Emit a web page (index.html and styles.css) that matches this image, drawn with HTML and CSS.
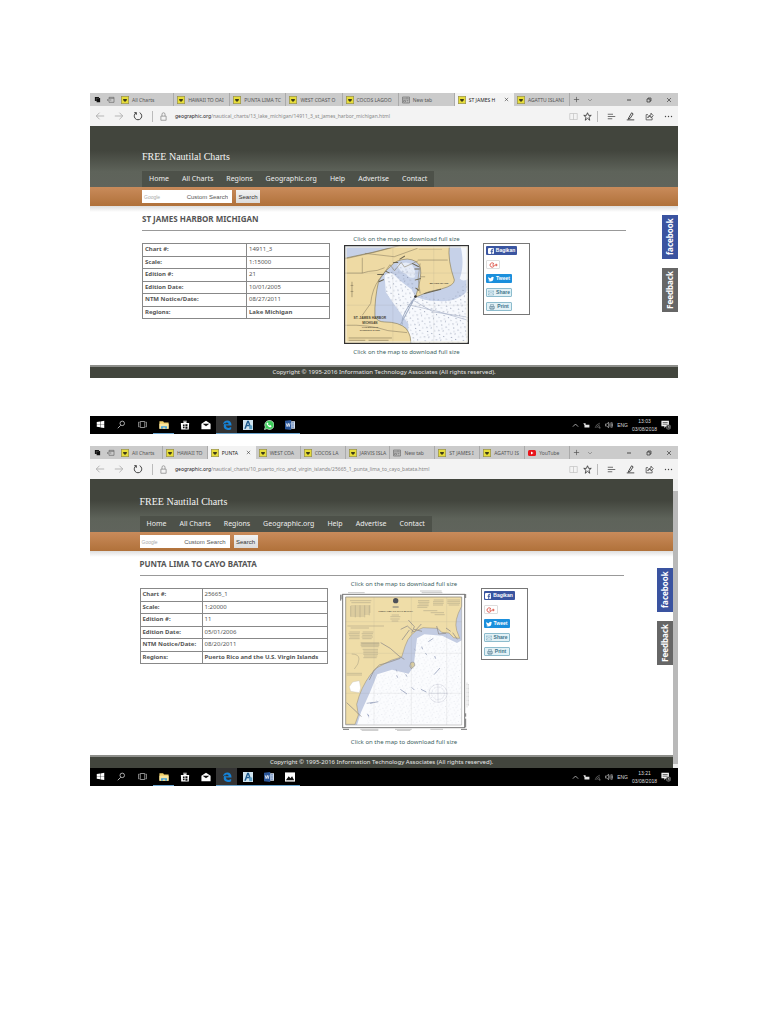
FILE: index.html
```html
<!DOCTYPE html>
<html lang="en">
<head>
<meta charset="utf-8">
<title>FREE Nautilal Charts</title>
<link rel="stylesheet" href="styles.css">
</head>
<body>
<svg class="defs" aria-hidden="true">
  <symbol id="fav" viewBox="0 0 16 16"><rect x=".7" y=".7" width="14.6" height="14.6" fill="#e6dc3a" stroke="#98924a" stroke-width="1.4"/><path d="M4 6h8l-1 3-3 3-3-3z" fill="#3d3b18"/></symbol>
  <symbol id="newtab" viewBox="0 0 16 16"><path d="M1 2h14v12H1zM1 6h14M3 4h2m2 0h6M3 9h4v3H3zm6 0h4m-4 3h4" fill="none" stroke="#777" stroke-width="1.500"/></symbol>
  <symbol id="yt" viewBox="0 0 16 16"><rect y="2" width="16" height="12" rx="3" fill="#e8151b"/><path d="M6 5v6l5-3z" fill="#fff"/></symbol>
  <symbol id="aside" viewBox="0 0 24 24"><path d="M3 3h14v4h4v14H9v-4H3z" fill="#111"/><path d="M8 16V8h9" fill="none" stroke="#777" stroke-width="1.500"/></symbol>
  <symbol id="setaside" viewBox="0 0 24 24"><path d="M6 8V4h15v15H6v-3M1 12h12M5 8l-4 4 4 4M6 7h15" fill="none" stroke="#666" stroke-width="2"/></symbol>
  <symbol id="back" viewBox="0 0 24 24"><path d="M22 12H3m8-8-8 8 8 8" fill="none" stroke="#aaa" stroke-width="2"/></symbol>
  <symbol id="fwd" viewBox="0 0 24 24"><path d="M2 12h19m-8-8 8 8-8 8" fill="none" stroke="#aaa" stroke-width="2"/></symbol>
  <symbol id="reload" viewBox="0 0 24 24"><path d="M8 4a9 9 0 1 0 8 0M8 4H3m5 0v5" fill="none" stroke="#444" stroke-width="2.400"/></symbol>
  <symbol id="lock" viewBox="0 0 24 24"><path d="M5 11h14v11H5zm3 0V6q0-4 4-4t4 4v5" fill="none" stroke="#888" stroke-width="2"/></symbol>
  <symbol id="book" viewBox="0 0 24 24"><path d="M2 4h20v16H2zm10 0v17" fill="none" stroke="#c4c4c4" stroke-width="2"/></symbol>
  <symbol id="star" viewBox="0 0 24 24"><path d="m12 2 3 7h7l-6 5 2 8-6-5-6 5 2-8-6-5h7z" fill="none" stroke="#333" stroke-width="2.200"/></symbol>
  <symbol id="hub" viewBox="0 0 24 24"><path d="M2 6h14M2 12h20M2 18h12" fill="none" stroke="#555" stroke-width="2.200"/></symbol>
  <symbol id="note" viewBox="0 0 24 24"><path d="M7 16 15 2l4 3-8 12-5 2zM2 21h20" fill="none" stroke="#333" stroke-width="2.300"/></symbol>
  <symbol id="sharei" viewBox="0 0 24 24"><path d="M8 7H3v14h16v-6M7 16q1-8 9-8V3l6 7-6 6v-5q-6 0-9 5z" fill="none" stroke="#444" stroke-width="2"/></symbol>
  <symbol id="more" viewBox="0 0 24 24"><g fill="#444"><circle cx="4" cy="12" r="1.800"/><circle cx="12" cy="12" r="1.800"/><circle cx="20" cy="12" r="1.800"/></g></symbol>
  <symbol id="plus" viewBox="0 0 24 24"><path d="M12 3v18M3 12h18" stroke="#555" stroke-width="2.400"/></symbol>
  <symbol id="down" viewBox="0 0 24 24"><path d="m4 8 8 8 8-8" fill="none" stroke="#777" stroke-width="2.400"/></symbol>
  <symbol id="min" viewBox="0 0 24 24"><path d="M4 12h16" stroke="#222" stroke-width="3"/></symbol>
  <symbol id="max" viewBox="0 0 24 24"><path d="M4 8h12v12H4zm4 0V4h12v12h-4" fill="none" stroke="#222" stroke-width="2.600"/></symbol>
  <symbol id="close" viewBox="0 0 24 24"><path d="m4 4 16 16M20 4 4 20" stroke="#333" stroke-width="2.600"/></symbol>
  <symbol id="win" viewBox="0 0 24 24"><path d="m2 5 9-1v7H2zm10-1 10-2v9H12zM2 12h9v7l-9-1zm10 0h10v9l-10-1z" fill="#fff"/></symbol>
  <symbol id="search" viewBox="0 0 24 24"><circle cx="14" cy="9" r="6" fill="none" stroke="#ddd" stroke-width="2"/><path d="m10 14-8 8" stroke="#ddd" stroke-width="2"/></symbol>
  <symbol id="task" viewBox="0 0 24 24"><path d="M6 4h12v16H6zM4 6H1v12h3m16-12h3v12h-3" fill="none" stroke="#bbb" stroke-width="2"/></symbol>
  <symbol id="folder" viewBox="0 0 24 24"><path d="M1 3h9l2 3h11v15H1z" fill="#efd06a"/><path d="M1 9h22v12H1z" fill="#f8e6a0"/><path d="M5 21v-6h14v6h-4v-3H9v3z" fill="#3fa0dc"/></symbol>
  <symbol id="store" viewBox="0 0 24 24"><path d="M2 7h20l-1 16H3zM8 7V2h8v5" fill="#fff"/><path d="M9 7V3h6v4" fill="none" stroke="#000"/><path d="M7 11h4v4H7zm6-1h5v5h-5zm-6 6h4v4H7zm6 0h5v5h-5z" fill="#111"/></symbol>
  <symbol id="mail" viewBox="0 0 24 24"><path d="m1 9 11-7 11 7v13H1z" fill="#fff"/><path d="M4 9h16l-8 6z" fill="#111"/></symbol>
  <symbol id="edge" viewBox="0 0 24 24"><path d="M2 11Q4 1 13 1q9 0 10 12H9q1 6 7 6 3 0 6-2v5q-3 2-8 2Q4 23 4 14q0-5 6-8-3 3-2 4h8q0-4-4-4-6 0-10 5z" fill="#1683d8"/></symbol>
  <symbol id="acad" viewBox="0 0 24 24"><path d="M0 0h24v24H0z" fill="#cfe3ee"/><path d="m3 21 7-19h4l7 19h-4l-2-6H9l-2 6zm7-9h4l-2-6z" fill="#1d5a8e"/><path d="M15 13h7v9h-7z" fill="#5b9fc4"/></symbol>
  <symbol id="wa" viewBox="0 0 24 24"><path d="M12 1a11 11 0 1 1-5 20l-6 2 2-6A11 11 0 0 1 12 1z" fill="#3ccb5a" stroke="#e8f8ea" stroke-width="1.500"/><path d="M8 6q-4 2 1 8t9 2l-1-3-3-1-1 2-4-4 2-2z" fill="#fff"/></symbol>
  <symbol id="word" viewBox="0 0 24 24"><path d="M12 3h12v18H12z" fill="#dfe8f5"/><path d="M0 2 15 0v24L0 22z" fill="#2a5699"/><path d="m3 8 2 8 3-8 2 8 2-8" fill="none" stroke="#fff" stroke-width="1.800"/><path d="M16 7h6m-6 5h6m-6 5h6" stroke="#2a5699" stroke-width="2"/></symbol>
  <symbol id="photo" viewBox="0 0 24 24"><path d="M0 1h24v22H0z" fill="#fff"/><path d="m2 20 7-10 4 5 4-5 5 10z" fill="#111"/></symbol>
  <symbol id="up" viewBox="0 0 24 24"><path d="m3 16 9-9 9 9" fill="none" stroke="#ddd" stroke-width="2.500"/></symbol>
  <symbol id="batt" viewBox="0 0 24 24"><path d="M5 9h17v10H5zM1 4h8v7H5z" fill="#e6e6e6"/></symbol>
  <symbol id="wifi" viewBox="0 0 24 24"><path d="M4 20Q6 8 20 4M9 20q1-7 11-10m-6 10q1-4 6-5" fill="none" stroke="#8c8c8c" stroke-width="2"/><circle cx="20" cy="20" r="2" fill="#ccc"/></symbol>
  <symbol id="vol" viewBox="0 0 24 24"><path d="M1 9h4l6-5v16l-6-5H1zM14 8q3 4 0 8m3-11q5 7 0 14m3-16q6 9 0 18" fill="none" stroke="#ddd" stroke-width="1.800"/></symbol>
  <symbol id="notif" viewBox="0 0 24 24"><path d="M1 2h18v13h-7l-4 4v-4H1z" fill="#f2f2f2"/><path d="M4 6h12M4 10h12" stroke="#222" stroke-width="1.500"/><circle cx="18" cy="17" r="5.500" fill="#333" stroke="#aaa"/><path d="M17 15h2v5" fill="none" stroke="#ddd" stroke-width="1.500"/></symbol>
  <symbol id="fb" viewBox="0 0 24 24"><rect width="24" height="24" rx="4" fill="#fff"/><path d="M13 24v-9h-3v-4h3V8q0-5 5-5h3v4h-2q-2 0-2 2v2h4l-1 4h-3v9z" fill="#3a55a0"/></symbol>
  <symbol id="gp" viewBox="0 0 36 24"><path d="M20 7Q16 2 10 4q-7 3-6 9 2 8 9 8 8-1 8-9h-8M24 12h10m-5-5v10" fill="none" stroke="#d94a3f" stroke-width="3.500"/></symbol>
  <symbol id="tw" viewBox="0 0 24 24"><path d="M1 3q5 6 11 6 0-6 5-6 3 0 4 2l3-1-2 4q0 14-14 14-5 0-8-3 5 0 7-2-4-1-5-4h2Q0 11 1 7l2 1Q0 5 1 3z" fill="#fff"/></symbol>
  <symbol id="env" viewBox="0 0 24 24"><path d="M1 4h22v16H1zl11 9L23 4M1 20l8-9m14 9-8-9" fill="#eaf4f8" stroke="#6ea3bb" stroke-width="1.800"/></symbol>
  <symbol id="prn" viewBox="0 0 24 24"><path d="M6 2h12v8H6zM2 10h20v8H2zM6 15h12v7H6z" fill="#cfe0e8" stroke="#5b8295" stroke-width="1.800"/></symbol>
</svg>

<main class="document">
  <section class="screen">
    <div class="tabbar">
      <div class="tab-tools"><svg class="i7"><use href="#aside"/></svg><svg class="i8"><use href="#setaside"/></svg></div>
      <div class="tabs">
        <button class="tab"><svg><use href="#fav"/></svg><span>All Charts</span></button>
        <button class="tab"><svg><use href="#fav"/></svg><span>HAWAII TO OAI</span></button>
        <button class="tab"><svg><use href="#fav"/></svg><span>PUNTA LIMA TC</span></button>
        <button class="tab"><svg><use href="#fav"/></svg><span>WEST COAST O</span></button>
        <button class="tab"><svg><use href="#fav"/></svg><span>COCOS LAGOO</span></button>
        <button class="tab"><svg><use href="#newtab"/></svg><span>New tab</span></button>
        <button class="tab active"><svg><use href="#fav"/></svg><span>ST JAMES H</span><svg class="x"><use href="#close"/></svg></button>
        <button class="tab"><svg><use href="#fav"/></svg><span>AGATTU ISLANI</span></button>
      </div>
      <div class="tab-add"><svg class="i7"><use href="#plus"/></svg><svg class="i6"><use href="#down"/></svg></div>
      <div class="win-buttons"><svg class="i6"><use href="#min"/></svg><svg class="i6"><use href="#max"/></svg><svg class="i6"><use href="#close"/></svg></div>
    </div>
    <div class="address">
      <svg class="i10"><use href="#back"/></svg><svg class="i10"><use href="#fwd"/></svg><svg class="i10"><use href="#reload"/></svg><i class="bar"></i><svg class="i9"><use href="#lock"/></svg>
      <p class="url"><b>geographic.org</b>/nautical_charts/13_lake_michigan/14911_3_st_james_harbor_michigan.html</p>
      <div class="url-tools"><svg class="i9"><use href="#book"/></svg><svg class="i9"><use href="#star"/></svg><i class="bar"></i></div>
      <div class="hub-tools"><svg class="i9"><use href="#hub"/></svg><svg class="i9"><use href="#note"/></svg><svg class="i9"><use href="#sharei"/></svg><svg class="i9"><use href="#more"/></svg></div>
    </div>
    <div class="viewport">
      <div class="site">
        <header class="site-head tall"><div class="wrap">
          <h1>FREE Nautilal Charts</h1>
          <nav><a href="#">Home</a><a href="#">All Charts</a><a href="#">Regions</a><a href="#">Geographic.org</a><a href="#">Help</a><a href="#">Advertise</a><a href="#">Contact</a></nav>
        </div></header>
        <div class="search-band"><form class="wrap"><label class="search"><span>Google</span><input type="text" value="Custom Search"></label><button type="button">Search</button></form></div>
        <div class="content"><div class="wrap">
          <h2>ST JAMES HARBOR MICHIGAN</h2>
          <div class="details">
            <table class="facts wide-label">
              <tr><th>Chart #:</th><td>14911_3</td></tr>
              <tr><th>Scale:</th><td>1:15000</td></tr>
              <tr><th>Edition #:</th><td>21</td></tr>
              <tr><th>Edition Date:</th><td>10/01/2005</td></tr>
              <tr><th>NTM Notice/Date:</th><td>08/27/2011</td></tr>
              <tr><th>Regions:</th><td><b>Lake Michigan</b></td></tr>
            </table>
            <div class="chart">
              <a href="#">Click on the map to download full size</a>
              <svg class="map-harbor" viewBox="0 0 376 296" preserveAspectRatio="none">
                <defs>
                  <pattern id="snd" width="37" height="29" patternUnits="userSpaceOnUse" patternTransform="rotate(14)"><path d="M4 5h3M17 3h3M30 9h2M9 16h3M23 19h3M33 25h2M13 26h2" stroke="#7f89a3" stroke-width="2.500"/></pattern>
                </defs>
                <rect width="376" height="296" fill="#c6d1e8"/>
                <path d="M122 92q10-14 26-5 30 30 55 45l12 22q45 20 90 8 55-14 71-70v204H208q-18-20-14-60-45-60-68-95z" fill="#f7f9fd"/>
                <path d="M215 155q60 12 105-20 35-25 45-75h11v70q-40 60-161 25z" fill="#c6d1e8"/>
                <path d="M350 0h26v100q-18 12-28 0 16-40 2-100z" fill="#f4f7fc"/>
                <path d="M160 60q30-15 45 0 14 22 7 37-17 4-25-10-20-6-27-27z" fill="#e6ecf7"/>
                <path d="M215 154q-50 65-38 84M215 154l-45 84" fill="none" stroke="#a3afc6" stroke-width="3"/>
                <path d="M190 178l90 20 96 28M208 165l60 35 100 15" fill="none" stroke="#aab3c8" stroke-width="2"/>
                <path d="M0 40Q95 22 172 0h145q-6 45 15 105 0 16-38 26-38 5-79 25 20-60 15-88Q222 44 190 42q-36 2-50 22-24 20-35 40-14 60-12 110 8 16 28 16 45 0 66 20 18 25 12 46H0z" fill="#eedaa4" stroke="#8d805b" stroke-width="2"/>
                <path d="M0 42Q95 22 172 1M0 84h55V38M55 84q15-6 45-8l22-8M63 25l88 10 70-25M222 45h90M222 48l-40 18-10-14-20 25-14-18-36 52M229 55l-6 45 6 45M230 95h14M106 103Q85 130 80 175L55 210M0 240q75-3 132 16l58 6" fill="none" stroke="#84795f" stroke-width="1.600"/>
                <path d="M100 88h20M125 78l12 6M148 52h15M167 43l16-10M205 55l20 10M212 72h15M213 105l18-5M215 128l11 8M105 110l15-7M240 146l28-8 24-6" fill="none" stroke="#6b6450" stroke-width="3"/>
                <path d="M128 90q50-50 85-5l-6 55q55 30 110 18l59-50v188H208q-18-20-14-60-40-50-68-95z" fill="url(#snd)"/>
                <path d="M147 0v296M0 84h376M0 180h376M270 0v296" stroke="#777" stroke-width=".7" opacity=".45"/>
                <circle cx="215" cy="154" r="4" fill="#333"/>
                <g fill="#4a4433" font-family="Liberation Sans, sans-serif" font-weight="bold" text-anchor="middle"><text x="78" y="222" font-size="10">ST. JAMES HARBOR</text><text x="78" y="236" font-size="9">MICHIGAN</text><text x="78" y="247" font-size="6">LAKE MICHIGAN</text><text x="78" y="257" font-size="6">SOUNDINGS IN FEET</text><text x="286" y="116" font-size="7">BEAVER ISLAND</text></g>
                <path d="M24 110v46m-4-35h8m-8 18h8M14 285h50m10 0h60M14 278h130" stroke="#897d5f" stroke-width="2"/>
                <path d="M230 5h90m-95 8h70" stroke="#b5a77f" stroke-width="1.500"/>
                <rect x="6" y="6" width="364" height="284" fill="none" stroke="#f4efe0" stroke-width="3"/><rect x="1.500" y="1.500" width="373" height="293" fill="none" stroke="#333" stroke-width="4"/>
              </svg>
              <a href="#">Click on the map to download full size</a>
            </div>
            <div class="share">
              <button class="s-fb"><svg><use href="#fb"/></svg>Bagikan</button>
              <button class="s-gp" aria-label="Google Plus"><svg><use href="#gp"/></svg></button>
              <button class="s-tw"><svg><use href="#tw"/></svg>Tweet</button>
              <button class="s-pl"><svg><use href="#env"/></svg>Share</button>
              <button class="s-pl"><svg><use href="#prn"/></svg>Print</button>
            </div>
          </div>
        </div>
        <div class="side"><a class="side-fb" href="#">facebook</a><a class="side-back" href="#">Feedback</a></div>
        </div>
        <footer>Copyright © 1995-2016 Information Technology Associates (All rights reserved).</footer>
      </div>
    </div>
    <div class="blank"></div>
    <div class="taskbar">
      <div class="apps"><span><svg><use href="#win"/></svg></span><span><svg><use href="#search"/></svg></span><span><svg><use href="#task"/></svg></span><span class="open"><svg><use href="#folder"/></svg></span><span><svg><use href="#store"/></svg></span><span><svg><use href="#mail"/></svg></span><span class="open current"><svg><use href="#edge"/></svg></span><span class="open"><svg><use href="#acad"/></svg></span><span class="open"><svg><use href="#wa"/></svg></span><span class="open"><svg><use href="#word"/></svg></span></div>
      <div class="tray"><svg><use href="#up"/></svg><svg><use href="#batt"/></svg><svg><use href="#wifi"/></svg><svg class="i8"><use href="#vol"/></svg><span>ENG</span><time>13:03<br>03/08/2018</time><svg class="i10"><use href="#notif"/></svg></div>
    </div>
  </section>

  <section class="screen">
    <div class="tabbar">
      <div class="tab-tools"><svg class="i7"><use href="#aside"/></svg><svg class="i8"><use href="#setaside"/></svg></div>
      <div class="tabs">
        <button class="tab"><svg><use href="#fav"/></svg><span>All Charts</span></button>
        <button class="tab"><svg><use href="#fav"/></svg><span>HAWAII TO</span></button>
        <button class="tab active"><svg><use href="#fav"/></svg><span>PUNTA</span><svg class="x"><use href="#close"/></svg></button>
        <button class="tab"><svg><use href="#fav"/></svg><span>WEST COA</span></button>
        <button class="tab"><svg><use href="#fav"/></svg><span>COCOS LA</span></button>
        <button class="tab"><svg><use href="#fav"/></svg><span>JARVIS ISLA</span></button>
        <button class="tab"><svg><use href="#newtab"/></svg><span>New tab</span></button>
        <button class="tab"><svg><use href="#fav"/></svg><span>ST JAMES I</span></button>
        <button class="tab"><svg><use href="#fav"/></svg><span>AGATTU IS</span></button>
        <button class="tab"><svg><use href="#yt"/></svg><span>YouTube</span></button>
      </div>
      <div class="tab-add"><svg class="i7"><use href="#plus"/></svg><svg class="i6"><use href="#down"/></svg></div>
      <div class="win-buttons"><svg class="i6"><use href="#min"/></svg><svg class="i6"><use href="#max"/></svg><svg class="i6"><use href="#close"/></svg></div>
    </div>
    <div class="address">
      <svg class="i10"><use href="#back"/></svg><svg class="i10"><use href="#fwd"/></svg><svg class="i10"><use href="#reload"/></svg><i class="bar"></i><svg class="i9"><use href="#lock"/></svg>
      <p class="url"><b>geographic.org</b>/nautical_charts/10_puerto_rico_and_virgin_islands/25665_1_punta_lima_to_cayo_batata.html</p>
      <div class="url-tools"><svg class="i9"><use href="#book"/></svg><svg class="i9"><use href="#star"/></svg><i class="bar"></i></div>
      <div class="hub-tools"><svg class="i9"><use href="#hub"/></svg><svg class="i9"><use href="#note"/></svg><svg class="i9"><use href="#sharei"/></svg><svg class="i9"><use href="#more"/></svg></div>
    </div>
    <div class="viewport">
      <div class="site">
        <header class="site-head"><div class="wrap">
          <h1>FREE Nautilal Charts</h1>
          <nav><a href="#">Home</a><a href="#">All Charts</a><a href="#">Regions</a><a href="#">Geographic.org</a><a href="#">Help</a><a href="#">Advertise</a><a href="#">Contact</a></nav>
        </div></header>
        <div class="search-band"><form class="wrap"><label class="search"><span>Google</span><input type="text" value="Custom Search"></label><button type="button">Search</button></form></div>
        <div class="content"><div class="wrap">
          <h2>PUNTA LIMA TO CAYO BATATA</h2>
          <div class="details">
            <table class="facts">
              <tr><th>Chart #:</th><td>25665_1</td></tr>
              <tr><th>Scale:</th><td>1:20000</td></tr>
              <tr><th>Edition #:</th><td>11</td></tr>
              <tr><th>Edition Date:</th><td>05/01/2006</td></tr>
              <tr><th>NTM Notice/Date:</th><td>08/20/2011</td></tr>
              <tr><th>Regions:</th><td><b>Puerto Rico and the U.S. Virgin Islands</b></td></tr>
            </table>
            <div class="chart">
              <a href="#">Click on the map to download full size</a>
              <svg class="map-coast" viewBox="0 0 387 423">
                <defs><pattern id="fine" width="23" height="19" patternUnits="userSpaceOnUse" patternTransform="rotate(10)"><path d="M3 4h2M13 2h2M8 11h2M19 9h2M14 16h2" stroke="#c3c8d4" stroke-width="1.600"/></pattern></defs>
                <rect x="8" y="13" width="366" height="400" fill="#fff" stroke="#777" stroke-width="3"/>
                <path d="M17 21h348v384H17z" fill="#fbfcfe"/>
                <path d="M17 21h348v130l-14 8-45-22-53-4-22 12-10 84-15 22-50-12-44 14-22 54-27 60-12 38H17z" fill="#c3cce2"/>
                <path d="M17 21h348v28q-24 42-15 72l9 24-18-2-14-14-22-2-12-12-44-2q-40 12-54 56l-10 32-32 10-42 22-19 20q-30 40-42 90l5 32-10 28H17z" fill="#efdda8" stroke="#9a8d69" stroke-width="1.500"/>
                <path d="M28 290l10-14 20-4 4 22-4 14-26-4z" fill="#fff" stroke="#bbb"/>
                <path d="M17 21h348v384H17z" fill="none" stroke="#999" stroke-width="1.500"/>
                <g stroke="#aea486" stroke-width="1.700" fill="none">
                  <path d="M30 32h64m-60 6h58m-60 10h60m-60 6h60m-60 6h60m-60 6h60m-60 6h55m-55 6h40M32 48v32m14-34v36m14-36v36m14-36v36m14-36v30"/>
                  <path d="M22 108h110m-100 6h55M28 126h32m8 0h32m-75 5h34m6 0h34m-72 5h32m8 0h30m-68 5h30m6 0h34m-72 5h32m8 0h28M68 178h46m-44 5h44m-44 5h44m-44 5h44m-42 5h40m-42 5h40M62 158h56m-56 4h56m-56 4h56m-54 4h52m-52 -9h54"/>
                  <path d="M234 32h34m-34 5h34m-32 5h30m-34 5h34m-34 5h30M281 30h30m-32 5h32m-32 5h32m-32 5h30M322 30h38m-38 5h38m-38 5h38m-34 5h32M155 75h22m-26 5h30m-30 7h28m-24 6h20M250 62h42m-20 6h40m-28 6h30"/>
                  <path d="M35 192q22 0 22 15t-14 30M20 250h46m-46 5h46"/>
                </g>
                <circle cx="167" cy="32" r="8" fill="#4d5058"/><path d="M158 51h18" stroke="#777" stroke-width="3"/>
                <text x="167" y="66" text-anchor="middle" font-family="Liberation Sans, sans-serif" font-size="7" font-weight="bold" fill="#4d4a3e">PUNTA LIMA TO CAYO BATATA</text>
                <path d="M122 158q30 14 55 40l16 10M182 118l20-10 20 18 22-24M205 90l18 20-8 20M186 150l22-30M222 118l24 6M290 108l6 24 22-2M318 114l14 10M338 128l14 20M98 245l20-20 28-8 35-12M88 270l12-25M20 338l32 30 12 12" stroke="#8f8b88" stroke-width="2.200" fill="none"/>
                <path d="M212 218q14-6 12 10l-10 8q-8-6-2-18z" fill="#d9cda2" stroke="#7f8395" stroke-width="1.500"/>
                <path d="M80 370l10 8 4-4-2 10 8 2-10 8-4-12z" fill="#98a3c2"/>
                <path d="M265 155l15-10m-35 25 3 8m8 12 5 4m-38-18 3 6m58 0 3 8m7 42 18-22m-144 28 3 7m40-20 4 7m-20 38 20 14m14-20 8 8m20-2 16 8M80 340l35-5" stroke="#aab1c8" stroke-width="2.500" fill="none"/>
                <path d="M80 400 110 260q60-30 105-20l22-90h70l58 20v230z" fill="url(#fine)"/>
                <path d="M231 222V160q2-18 40-22l40 2 45 28v232H80l18-60 26-64 40-15 44 12z" fill="#fbfcfe"/>
                <path d="M231 222V160q2-18 40-22l40 2 45 28v232H80l18-60 26-64 40-15 44 12z" fill="url(#fine)"/>
                <path d="M265 155l15-10m-35 25 3 8m8 12 5 4m23 4 3 8m-5 48 18-20m-130 22 3 7m24-10 4 7m-20 38 20 14m14-20 8 8m20-2 16 8M90 340l25-5" stroke="#99a2bd" stroke-width="2.500" fill="none"/>
                <g fill="none" stroke="#b0b3c4"><circle cx="294" cy="310" r="27" stroke-width="2" stroke-dasharray="2 2"/><circle cx="294" cy="310" r="19" stroke-dasharray="3 2"/><path d="M267 310h54M294 283v54"/></g>
                <path d="M102 21v384M214 21v384M320 21v384M17 190h348M17 310h348M17 95h348" stroke="#888" stroke-width=".8" opacity=".4"/>
                <path d="M2 14v18m4-18v14M377 12v12M377 370v10m0 6v26M9 418h18m336 0h18" stroke="#777" stroke-width="3"/>
                <path d="M240 3h65m-60 5h62M24 8h50M61 418h54m-50 4h50m50-4h50m-44 4h40m60-4h38" stroke="#aaa" stroke-width="2"/>
                <path d="M381 278v74m5-70v66" stroke="#bbb" stroke-width="2" stroke-dasharray="3 1"/>
              </svg>
              <a href="#">Click on the map to download full size</a>
            </div>
            <div class="share">
              <button class="s-fb"><svg><use href="#fb"/></svg>Bagikan</button>
              <button class="s-gp" aria-label="Google Plus"><svg><use href="#gp"/></svg></button>
              <button class="s-tw"><svg><use href="#tw"/></svg>Tweet</button>
              <button class="s-pl"><svg><use href="#env"/></svg>Share</button>
              <button class="s-pl"><svg><use href="#prn"/></svg>Print</button>
            </div>
          </div>
        </div>
        <div class="side low"><a class="side-fb" href="#">facebook</a><a class="side-back" href="#">Feedback</a></div>
        </div>
        <footer>Copyright © 1995-2016 Information Technology Associates (All rights reserved).</footer>
      </div>
      <div class="scrollbar"><i></i></div>
    </div>
    <div class="taskbar">
      <div class="apps"><span><svg><use href="#win"/></svg></span><span><svg><use href="#search"/></svg></span><span><svg><use href="#task"/></svg></span><span class="open"><svg><use href="#folder"/></svg></span><span><svg><use href="#store"/></svg></span><span><svg><use href="#mail"/></svg></span><span class="open current"><svg><use href="#edge"/></svg></span><span class="open"><svg><use href="#acad"/></svg></span><span class="open"><svg><use href="#word"/></svg></span><span class="open"><svg><use href="#photo"/></svg></span></div>
      <div class="tray"><svg><use href="#up"/></svg><svg><use href="#batt"/></svg><svg><use href="#wifi"/></svg><svg class="i8"><use href="#vol"/></svg><span>ENG</span><time>13:21<br>03/08/2018</time><svg class="i10"><use href="#notif"/></svg></div>
    </div>
  </section>
</main>
</body>
</html>
```
FILE: styles.css
```css
* { box-sizing: border-box; }
body { margin: 0; background: #fff; font-family: "Noto Sans", sans-serif; font-size: 6px; color: #444; }
h1, h2, p { margin: 0; font-weight: normal; }
button, input { font: inherit; color: inherit; border: 0; padding: 0; margin: 0; background: none; }
a { color: inherit; text-decoration: none; }
svg { display: block; flex: none; }
.defs { position: absolute; width: 0; height: 0; }
.i6 { width: 6px; height: 6px; }
.i7 { width: 7px; height: 7px; }
.i8 { width: 8px; height: 8px; }
.i9 { width: 9px; height: 9px; }
.i10 { width: 10px; height: 10px; }

.document { padding: 93px 90px; display: flex; flex-direction: column; gap: 12px; }

.tabbar { display: flex; height: 13px; background: #cbcbcb; }
.tab-tools { width: 28px; display: flex; align-items: center; gap: 6px; padding-left: 4px; }
.tabs { flex: 1; display: flex; min-width: 0; }
.tab { flex: 1; min-width: 0; display: flex; align-items: center; gap: 3px; padding: 0 1px 0 3px; border-right: 1px solid #aaa; color: #555; text-align: left; font-family: "Noto Sans", sans-serif; font-size: 5px; }
.tab svg { width: 8px; height: 8px; }
.tab span { flex: 1; white-space: nowrap; line-height: 8px; }
.tab.active { background: #f3f3f3; color: #222; border-color: #f3f3f3; padding-right: 4px; }
.tab .x { width: 5px; height: 5px; }
.tab-add { display: flex; align-items: center; gap: 7px; padding-left: 3px; width: 45px; }
.win-buttons { width: 63px; display: flex; align-items: center; gap: 14px; padding-left: 11px; }

.address { display: flex; align-items: center; height: 20px; padding: 0 5px; gap: 9px; background: #f3f3f3; }
.bar { width: 1px; height: 11px; background: #bbb; }
.address > .bar { margin-right: -3px; }
.url { flex: 1; min-width: 0; margin-left: -2px; white-space: nowrap; font-family: "Noto Sans", sans-serif; font-size: 5px; line-height: 10px; color: #888; }
.url b { font-weight: normal; color: #222; }
.url-tools { display: flex; align-items: center; gap: 5px; }
.hub-tools { display: flex; align-items: center; gap: 10px; }

.viewport { display: flex; }
.site { flex: 1; min-width: 0; background: #fff; }
.scrollbar { width: 5px; background: #b9b9b9; display: flex; flex-direction: column; justify-content: space-between; }
.scrollbar::before { content: ""; height: 12px; background: #eee; }
.scrollbar i { height: 4px; background: #eee; }
.wrap { max-width: 484px; margin: 0 auto; }
.site-head { padding-top: 16px; background: linear-gradient(#42453d 0, #42453d 40%, #5e635a 75%, #60645c); }
.site-head.tall { padding-top: 24px; }
h1 { font-family: "Liberation Serif", serif; font-size: 10px; line-height: 14px; color: #f4f4f4; padding-bottom: 7px; }
nav { display: flex; width: max-content; height: 16px; gap: 13px; align-items: center; padding: 0 7px; background: #4d5149; color: #eee; font-size: 7px; line-height: 10px; }

.search-band { height: 19px; background: linear-gradient(#c98b5b, #b0713a); padding-top: 3px; }
.search-band form { display: flex; gap: 4px; }
.search { width: 90px; height: 13px; background: #fff; display: flex; align-items: center; padding: 0 4px 0 2px; }
.search span { color: #aaa; font-family: "Liberation Sans", sans-serif; font-size: 5px; }
.search input { flex: 1; min-width: 0; text-align: right; font-family: "Liberation Sans", sans-serif; font-size: 6px; line-height: 8px; color: #555; }
.search-band button { width: 24px; height: 13px; background: linear-gradient(#f2f2f2, #dcdcdc); font-family: "Liberation Sans", sans-serif; font-size: 6px; color: #333; }

.content { position: relative; padding: 8px 0; background: linear-gradient(#dedede, #fff 6px); }
h2 { font-size: 8px; line-height: 10px; font-weight: bold; color: #555; padding-bottom: 6px; border-bottom: 1px solid #999; }
.details { display: flex; align-items: flex-start; padding-top: 3px; }
.facts { width: 188px; height: 76px; margin-top: 9px; border-collapse: collapse; table-layout: fixed; line-height: 8px; white-space: nowrap; }
.facts th { width: 62px; text-align: left; font-weight: bold; }
.facts.wide-label th { width: 104px; }
.facts th, .facts td { border: 1px solid #888; padding: 1px 2px 2px; color: #555; }
.chart { width: 129px; margin-left: 12px; display: flex; flex-direction: column; align-items: center; line-height: 10px; color: #3d5f5f; white-space: nowrap; }
.map-harbor { width: 125px; height: 99px; margin: 1px 0 3px; }
.map-coast { width: 129px; height: 141px; margin: 1px 0 6px; }
.share { width: 47px; margin: 9px 0 0 12px; padding: 2px; border: 1px solid #777; height: 72px; display: flex; flex-direction: column; align-items: flex-start; gap: 5px; }
.share button { display: flex; align-items: center; justify-content: center; gap: 2px; height: 9px; width: 26px; border-radius: 1px; font-family: "Liberation Sans", sans-serif; font-weight: bold; font-size: 5px; line-height: 7px; color: #fff; }
.share svg { width: 6px; height: 6px; }
.share .s-fb { width: 31px; background: #3a55a0; }
.share .s-gp { width: 14px; border: 1px solid #ddd; background: #fff; }
.share .s-gp svg { width: 9px; }
.share .s-tw { background: #1b8fdc; }
.share .s-pl { border: 1px solid #8dbccd; background: #e2f1f6; color: #41748a; }
.side { position: absolute; right: 0; top: 9px; display: flex; flex-direction: column; gap: 9px; }
.side.low { top: 17px; }
.side a { width: 16px; height: 44px; writing-mode: vertical-rl; transform: rotate(180deg); text-align: center; line-height: 16px; font-size: 8px; font-weight: bold; color: #fff; }
.side-fb { background: #3a53a0; }
.side-back { background: #666; }
footer { border-top: 2px solid #8e8f8b; height: 13px; background: #42453d; color: #e8e8e8; text-align: center; line-height: 10px; }
.blank { height: 38px; }

.taskbar { display: flex; justify-content: space-between; height: 18px; background: #000; }
.apps { display: flex; }
.apps span { width: 21px; display: flex; align-items: center; justify-content: center; border-bottom: 1px solid #000; }
.apps svg { width: 10px; height: 10px; }
.apps span:nth-child(-n+3) svg { width: 9px; height: 9px; }
.apps .open { border-color: #6ca5cf; }
.apps .current { background: #333; }
.tray { display: flex; align-items: center; gap: 4px; padding-right: 7px; color: #ddd; font-family: "Liberation Sans", sans-serif; font-size: 5px; }
.tray svg { width: 7px; height: 7px; }
.tray .i8 { width: 8px; height: 8px; }
.tray .i10 { width: 10px; height: 10px; }
.tray time { text-align: center; line-height: 8px; }
```
